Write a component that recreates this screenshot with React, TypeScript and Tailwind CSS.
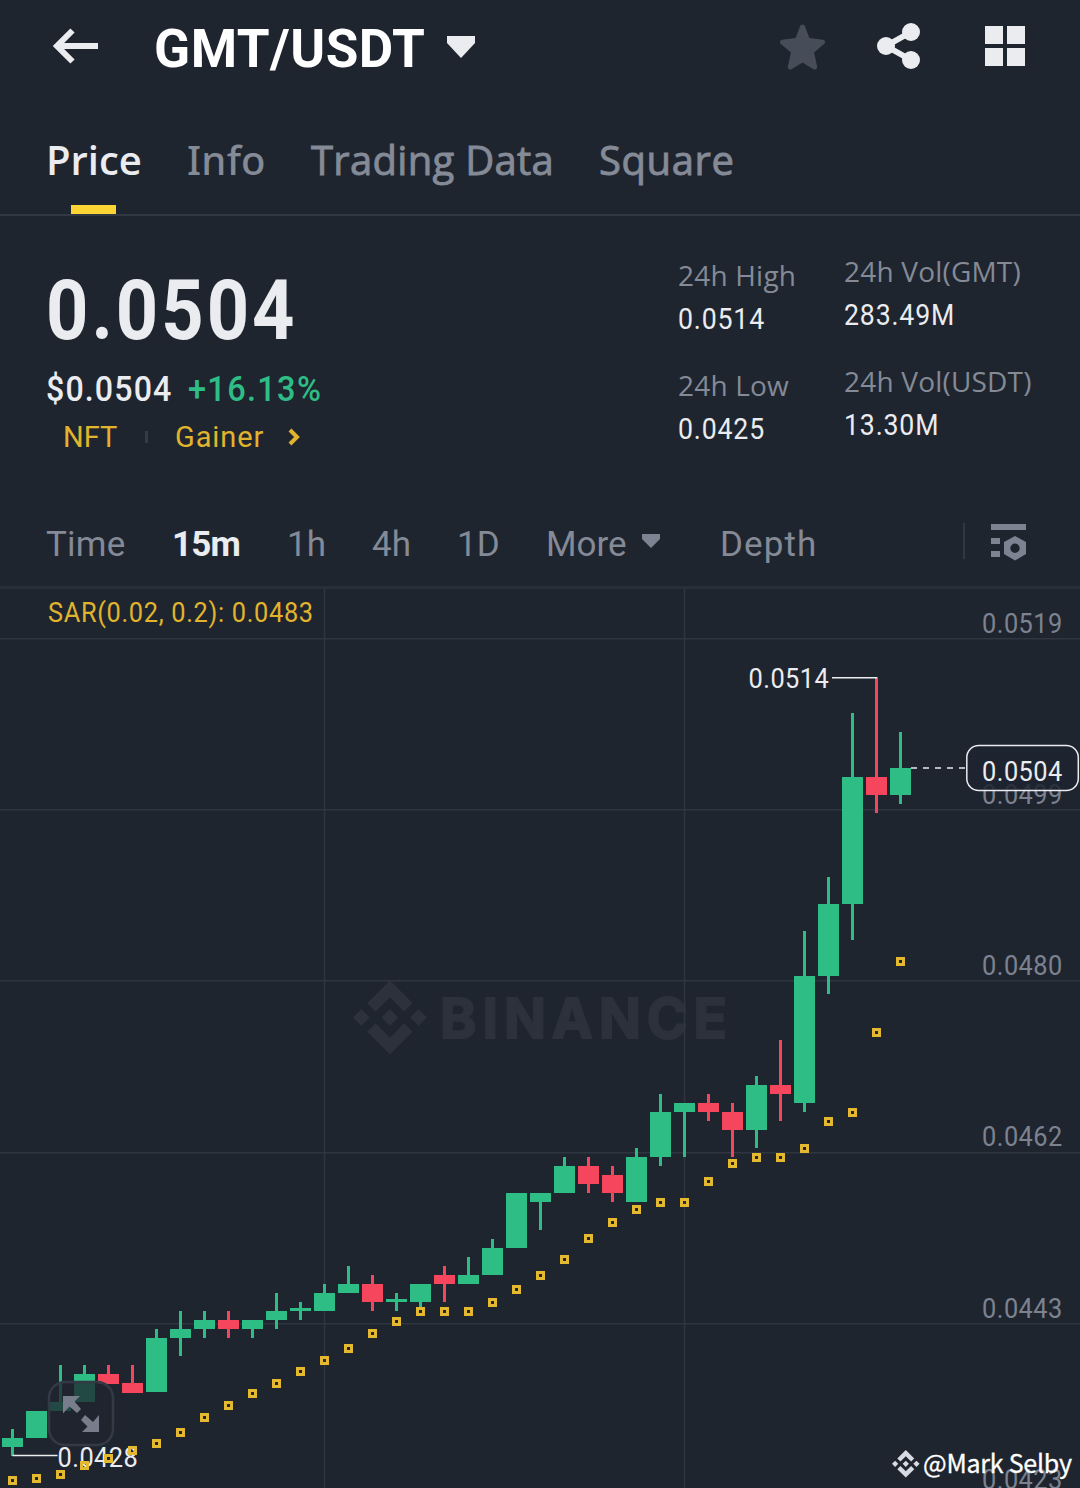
import React from 'react';

type Candle = [up: 0 | 1, high: number, top: number, bottom: number, low: number];

const CANDLES: Candle[] = [
  [1, 1429, 1438, 1447, 1456],
  [1, 1411, 1411, 1438, 1438],
  [1, 1365, 1402, 1411, 1411],
  [1, 1365, 1374, 1402, 1402],
  [0, 1365, 1374, 1384, 1384],
  [0, 1365, 1383, 1393, 1393],
  [1, 1329, 1338, 1392, 1392],
  [1, 1311, 1329, 1338, 1356],
  [1, 1311, 1320, 1329, 1338],
  [0, 1311, 1320, 1329, 1338],
  [1, 1320, 1320, 1329, 1338],
  [1, 1293, 1311, 1320, 1329],
  [1, 1302, 1308, 1311, 1320],
  [1, 1284, 1293, 1311, 1311],
  [1, 1266, 1284, 1293, 1293],
  [0, 1275, 1284, 1302, 1311],
  [1, 1293, 1299, 1302, 1311],
  [1, 1284, 1284, 1302, 1308],
  [0, 1266, 1275, 1284, 1302],
  [1, 1257, 1275, 1284, 1284],
  [1, 1239, 1248, 1275, 1275],
  [1, 1193, 1193, 1248, 1248],
  [1, 1193, 1193, 1202, 1230],
  [1, 1157, 1166, 1193, 1193],
  [0, 1157, 1166, 1184, 1193],
  [0, 1166, 1175, 1193, 1202],
  [1, 1148, 1157, 1202, 1202],
  [1, 1094, 1112, 1157, 1166],
  [1, 1103, 1103, 1112, 1157],
  [0, 1094, 1103, 1112, 1121],
  [0, 1103, 1112, 1130, 1157],
  [1, 1076, 1085, 1130, 1148],
  [0, 1040, 1085, 1094, 1121],
  [1, 931, 976, 1103, 1112],
  [1, 877, 904, 976, 994],
  [1, 713, 777, 904, 940],
  [0, 677, 777, 795, 813],
  [1, 732, 768, 795, 804],
];

const SAR = [
  1480, 1478, 1474, 1465, 1458, 1450, 1443, 1432, 1417, 1405, 1393, 1383, 1371, 1360, 1348, 1333,
  1321, 1311, 1311, 1311, 1302, 1289, 1275, 1259, 1238, 1222, 1209, 1202, 1202, 1181, 1163, 1157,
  1157, 1148, 1121, 1112, 1032, 961,
];

const PRICE_AXIS: [string, number][] = [
  ['0.0519', 633],
  ['0.0499', 804],
  ['0.0480', 975],
  ['0.0462', 1146],
  ['0.0443', 1318],
  ['0.0423', 1489],
];

const LOGO =
  'M16.624 13.9202l2.7175 2.7154-7.353 7.353-7.353-7.352 2.7175-2.7164 4.6355 4.6595 4.6356-4.6595zm4.6366-4.6366L24 12l-2.7154 2.7164L18.5682 12l2.6924-2.7164zm-9.272.001l2.7163 2.6914-2.7164 2.7174v-.001L9.2721 12l2.7164-2.7154zm-9.2722-.001L5.4088 12l-2.6914 2.6924L0 12l2.7164-2.7164zM11.9885.0115l7.353 7.329-2.7174 2.7154-4.6356-4.6356-4.6355 4.6595-2.7174-2.7154 7.353-7.353z';

function Header() {
  return (
    <header className="flex h-24 shrink-0 items-start">
      <svg className="mt-[27px] ml-[52px] h-[38px] w-[46px]" viewBox="0 0 46 38" fill="none" stroke="#eaecf0" strokeWidth="6">
        <path d="M20.5 3.5 5 19l15.500 15.500M5 19h41" />
      </svg>
      <h1 className="ml-[56px] w-[293px] font-['Roboto'] text-[53px] leading-[98px] font-bold tracking-[0.5px] whitespace-nowrap text-white">
        GMT/USDT
      </h1>
      <svg className="mt-9 h-[22px] w-7" viewBox="0 0 28 22" fill="#eaecf0">
        <path d="M0 0h28v7L14 22 0 7z" />
      </svg>
      <svg className="mt-6 ml-[305px] h-[46px] w-[45px]" viewBox="0 0 45 46" fill="#474d58" stroke="#474d58" strokeWidth="5" strokeLinejoin="round">
        <path d="M22.500 3 27.500 16.200l15 2-11.200 9.300 3.400 15.500-12.200-7.400-12.200 7.400 3.400-15.500L2.500 18.200l15-2z" />
      </svg>
      <svg className="mt-[23px] ml-[52px] h-[46px] w-[43px]" viewBox="0 0 43 46" fill="#eaecf0">
        <path d="M9 23 34 9M9 23l25 14" stroke="#eaecf0" strokeWidth="6" />
        <circle cx="9" cy="23" r="9" />
        <circle cx="34" cy="9" r="9" />
        <circle cx="34" cy="37" r="9" />
      </svg>
      <div className="mt-[26px] ml-[65px] grid grid-cols-2 gap-1">
        <span className="size-[18px] bg-[#eaecf0]" />
        <span className="size-[18px] bg-[#eaecf0]" />
        <span className="size-[18px] bg-[#eaecf0]" />
        <span className="size-[18px] bg-[#eaecf0]" />
      </div>
    </header>
  );
}

function Tabs() {
  return (
    <nav className="flex h-[120px] shrink-0 items-start border-b-2 border-[#313843] pl-[46px] font-['Open_Sans'] text-[40px] leading-[127px] whitespace-nowrap text-[#848a96]">
      <div className="flex h-[118px] w-[141px] flex-col justify-between">
        <span className="h-[100px] font-semibold text-[#eaecf0]">Price</span>
        <span className="ml-[25px] h-[9px] w-[45px] bg-[#fcd535]" />
      </div>
      <span className="w-[124px] font-['Noto_Sans'] font-medium tracking-[0.2px]">Info</span>
      <span className="w-[288px] tracking-[0.3px] [-webkit-text-stroke:0.9px_#848a96]">Trading Data</span>
      <span className="tracking-[0.6px] [-webkit-text-stroke:0.9px_#848a96]">Square</span>
    </nav>
  );
}

function Stat({ label, value }: { label: string; value: string }) {
  return (
    <div className="h-[110px] whitespace-nowrap">
      <div className="h-[43px] font-['Open_Sans'] text-[28px] leading-[42px] tracking-[0.2px] text-[#848a96]">{label}</div>
      <div className="h-[42px] w-fit origin-left scale-x-[0.92] font-['Roboto'] text-[29px] leading-[44px] tracking-[0.9px] text-[#eaecf0]">
        {value}
      </div>
    </div>
  );
}

function Summary() {
  return (
    <section className="flex h-[284px] shrink-0 items-start font-['Roboto']">
      <div className="w-[678px] pl-[46px] whitespace-nowrap">
        <div className="mt-[47px] h-[102px] w-fit origin-left scale-x-[0.88] text-[84px] leading-[95px] font-bold tracking-[3.400px] text-[#eaecf0]">
          0.0504
        </div>
        <div className="flex h-[50px] items-center text-[35px] leading-[52px] font-medium">
          <span className="w-[142px] origin-left scale-x-[0.92] tracking-[1.200px] text-[#eaecf0]">$0.0504</span>
          <span className="origin-left scale-x-[0.93] tracking-[1.400px] text-[#2ebd85]">+16.13%</span>
        </div>
        <div className="flex h-11 items-center pl-[17px] text-[29px] leading-[46px] text-[#e0b42c]">
          <span className="w-[82px]">NFT</span>
          <span className="h-3 w-[3px] bg-[#343a46]" />
          <span className="ml-[27px] w-[113px] tracking-[0.9px]">Gainer</span>
          <svg className="h-[18px] w-3" viewBox="0 0 12 18" fill="none" stroke="#e0b42c" strokeWidth="4">
            <path d="m2 2 7 7-7 7" />
          </svg>
        </div>
      </div>
      <div className="mt-[38px] w-[166px]">
        <Stat label="24h High" value="0.0514" />
        <Stat label="24h Low" value="0.0425" />
      </div>
      <div className="mt-[34px]">
        <Stat label="24h Vol(GMT)" value="283.49M" />
        <Stat label="24h Vol(USDT)" value="13.30M" />
      </div>
    </section>
  );
}

function Intervals() {
  return (
    <div className="flex h-[86px] shrink-0 items-center pl-[46px] font-['Roboto'] text-[35px] leading-[86px] whitespace-nowrap text-[#848a96]">
      <span className="w-[126px] pt-1 tracking-[0.2px]">Time</span>
      <span className="w-[115px] pt-1 font-bold tracking-[-0.8px] text-[#eaecf0]">15m</span>
      <span className="w-[85px] pt-1">1h</span>
      <span className="w-[85px] pt-1">4h</span>
      <span className="w-[89px] pt-1">1D</span>
      <span className="w-[96px] pt-1">More</span>
      <svg className="-mt-1 h-[14px] w-[18px]" viewBox="0 0 18 14" fill="#7d8391">
        <path d="M0 0h18v5L9 14 0 5z" />
      </svg>
      <span className="ml-[60px] w-[243px] pt-1 tracking-[1.100px]">Depth</span>
      <span className="-mt-1 h-9 w-0.5 bg-[#313843]" />
      <svg className="-mt-0.5 ml-[26px] h-[37px] w-[35px]" viewBox="0 0 35 37" fill="#7d8391">
        <path d="M0 0h35v6H0zM0 14h9v6H0zM0 27h9v6H0z" />
        <path fillRule="evenodd" d="m24 12 11 6v12l-11 6.500L13 30V18zm0 7.500a4.700 4.700 0 1 0 0 9.400 4.700 4.700 0 0 0 0-9.400z" />
      </svg>
    </div>
  );
}

function PriceText({ x, y, children }: { x: number; y: number; children: string }) {
  return (
    <text transform={`translate(${x} ${y}) scale(0.94 1)`} letterSpacing="0.500">
      {children}
    </text>
  );
}

function Chart() {
  return (
    <svg className="block h-[902px] w-[1080px] shrink-0" viewBox="0 586 1080 902">
      <path transform="translate(353 980.500) scale(3.080)" d={LOGO} fill="#2c313c" />
      <text x="440" y="1037.500" textLength="287" fontFamily="Inter" fontWeight="700" fontSize="55" fill="#2c313c" stroke="#2c313c" strokeWidth="2">
        BINANCE
      </text>

      <rect x="0" y="586" width="1080" height="3" fill="#292f3a" />
      {[638, 809, 980, 1152, 1323].map((y) => (
        <rect key={y} x="0" y={y} width="1080" height="1.500" fill="#303641" />
      ))}
      {[324, 684].map((x) => (
        <rect key={x} x={x - 0.25} y="589" width="1.500" height="900" fill="#303641" />
      ))}

      {CANDLES.map(([up, high, top, bottom, low], i) => {
        const x = 12 + i * 24;
        const fill = up ? '#2ebd85' : '#f6465d';
        return (
          <g key={i} fill={fill} shapeRendering="crispEdges">
            <rect x={x - 1} y={high} width="3" height={low - high} />
            <rect x={x - 10} y={top} width="21" height={bottom - top} />
          </g>
        );
      })}

      <g fontFamily="Roboto" fontSize="27" fill="#7c828f">
        {PRICE_AXIS.map(([label, y]) => (
          <PriceText key={label} x={982} y={y}>
            {label}
          </PriceText>
        ))}
      </g>

      <rect x="49" y="1382" width="64" height="63" rx="16" fill="#1f252f" fillOpacity="0.76" stroke="#343a45" strokeWidth="2.500" />
      <path d="M63 1396h17l-5.500 5.500 6.500 7.500-4 4-7.500-6.500-6.500 7zM99 1432H82l5.500-5.500-6.500-6.500 4-5 8 7 6-7z" fill="#777d8b" />

      <g fontFamily="Roboto" fontSize="27" fill="#eaecf0">
        <rect x="832" y="677" width="45" height="1.500" />
        <PriceText x={748.5} y={688}>0.0514</PriceText>
        <path d="M12.500 1455.500h45" stroke="#eaecf0" strokeWidth="1.500" fill="none" />
        <PriceText x={57.5} y={1467}>0.0428</PriceText>
        <path d="M911 768h56" stroke="#eaecf0" strokeWidth="1.500" strokeDasharray="6 6" />
        <rect x="966.800" y="745.500" width="111.500" height="45" rx="12" fill="#1f252f" fillOpacity="0.85" stroke="#eaecf0" strokeWidth="1.500" />
        <PriceText x={982} y={781}>0.0504</PriceText>
      </g>

      <text transform="translate(48 622) scale(0.94 1)" textLength="282" fontFamily="Roboto" fontSize="27" fill="#e0b42c">
        SAR(0.02, 0.2): 0.0483
      </text>
      {SAR.map((y, i) => (
        <rect key={i} x={9.500 + i * 24} y={y - 2.500} width="6" height="6" fill="none" stroke="#e5b92f" strokeWidth="3" />
      ))}

      <path transform="translate(892 1450) scale(1.150)" d={LOGO} fill="#d9dbe2" />
      <text x="923" y="1473" textLength="149" fontFamily="'Noto Sans CJK SC', sans-serif" fontSize="25" fill="#ffffff" stroke="#ffffff" strokeWidth="0.300">
        @Mark Selby
      </text>
    </svg>
  );
}

export default function App() {
  return (
    <main className="flex h-[1488px] w-[1080px] flex-col overflow-hidden bg-[#1f252f]">
      <Header />
      <Tabs />
      <Summary />
      <Intervals />
      <Chart />
    </main>
  );
}
